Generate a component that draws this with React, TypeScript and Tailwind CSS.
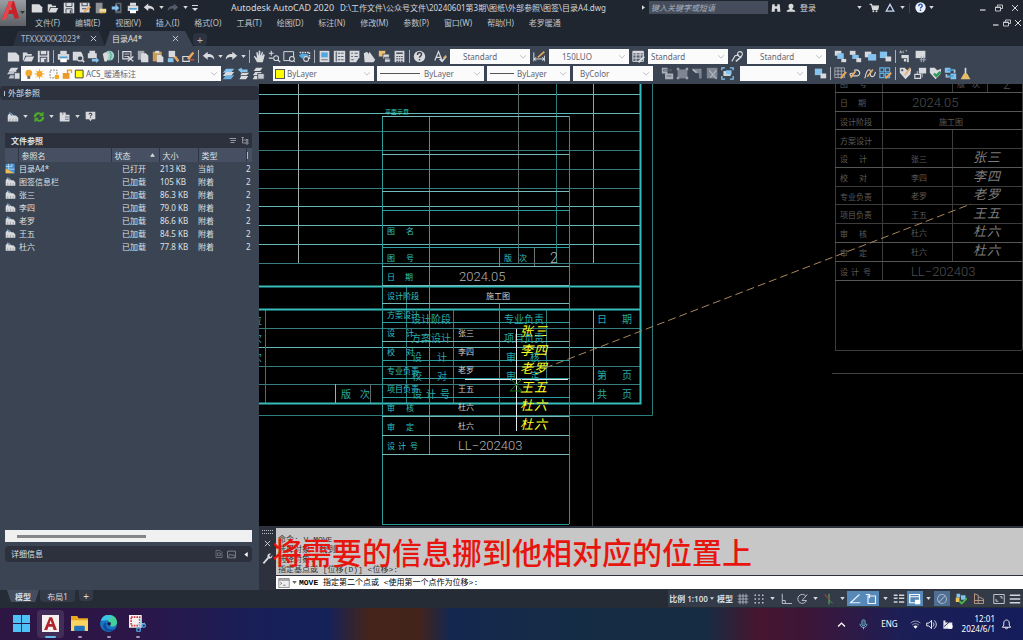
import React from "react";

const W = "#d8dade";
const B = "#84c3ee";
const O = "#e9a85b";

const I: Record<string, React.ReactNode> = {
  new: <path d="M1 3h10l4 4v7H1z" fill={W} />,
  open: <><path d="M1 3h5l1 2h5v2H4l-2 6H1z" fill={W} /><path d="M5 8h10l-3 6H2z" fill={W} /></>,
  save: <><path d="M1 1h14v14H1z" fill={W} /><path d="M4 1v5h8V1M4 15V9h8v6" fill="none" stroke="#48505e" strokeWidth="1.3" /><path d="M9 11h2v4H9z" fill="#48505e" /></>,
  saveas: <><path d="M1 1h13v13H1z" fill={W} /><path d="M4 1v4h7V1M4 9h6" fill="none" stroke="#48505e" strokeWidth="1.4" /><path d="M6 14l1-3 7-6 2 2-7 6z" fill={O} /></>,
  webopen: <><path d="M1 1h9v14H1z" fill="#8c8f94" /><path d="M6 9h9v5H6z" fill="#f0dca0" /><path d="M7 14h7" stroke="#e2af4f" strokeWidth="2" /></>,
  mobile: <><path d="M6 1h8v14H6z" fill="#5d6571" /><path d="M8 3h4v9H8z" fill="#2c333f" /><path d="M1 6h5V3l5 5-5 5v-3H1z" fill={B} /></>,
  print: <><path d="M4 1h8v4H4z" fill={W} /><path d="M1 5h14v7H1z" fill={W} /><path d="M3 9h10" stroke="#4aa0d8" strokeWidth="2" /><path d="M4 11h8v4H4z" fill="#fff" /></>,
  preview: <><path d="M1 2h10l2 3v3H6v5H1z" fill={W} /><circle cx="10" cy="10" r="3.5" fill="none" stroke={W} strokeWidth="1.6" /><path d="M12 12l3 3" stroke={W} strokeWidth="2" /></>,
  publish: <><path d="M3 1h7v3H3zM1 4h11v6H1z" fill={W} /><path d="M6 11h5V9l4 3.5-4 3.5v-2H6z" fill={B} /></>,
  globe: <><circle cx="9" cy="7" r="6" fill="#9ed3c6" /><path d="M1 5c3-3 5-2 7 1l-2 8H3z" fill={W} /><path d="M9 1c3 4 3 8 0 12" fill="none" stroke="#4c8d84" /></>,
  cut: <><path d="M1 2h10v9H1z" fill="none" stroke={W} strokeWidth="1.4" /><path d="M3 5h6M3 8h6" stroke={W} /><path d="M7 8l7 6M14 8l-7 6" stroke={W} strokeWidth="1.6" /></>,
  copy: <><path d="M1 1h8v11H1z" fill="#a3a8b0" /><path d="M5 4h6l3 3v8H5z" fill={W} /></>,
  paste: <><path d="M1 2h11v12H1z" fill="#c99b5a" /><path d="M4 1h5v3H4z" fill={W} /><path d="M6 6h5l3 3v6H6z" fill={W} /></>,
  match: <><path d="M2 1h8v8H2z" fill={W} /><path d="M1 10h7v5H1z" fill={B} /><path d="M8 9l3-2 4 6-2 2z" fill={O} /></>,
  block: <><path d="M1 8h8v6H1z" fill="none" stroke={W} strokeWidth="1.5" /><path d="M6 10l7-8 2 2-6 8z" fill={O} /><path d="M9 12h6" stroke="#c04f38" strokeWidth="2" /></>,
  undo: <path d="M7 2L1 7l6 5V9c4-1 6 0 8 3 0-5-3-7-8-7z" fill={W} />,
  redo: <path d="M9 2l6 5-6 5V9c-4-1-6 0-8 3 0-5 3-7 8-7z" fill={W} />,
  redodim: <path d="M9 2l6 5-6 5V9c-4-1-6 0-8 3 0-5 3-7 8-7z" fill="#535b68" />,
  hand: <path d="M5 15L1 8l1-1 3 3-1-7 1.500-.5L7 7V1h2v6l2-5 1.500.5L11 8l2-3 1.500 1L12 15z" fill={W} />,
  zoompm: <><path d="M1 4h6M4 1v6M1 10h5" stroke={W} strokeWidth="1.3" /><circle cx="10" cy="10" r="3" fill="none" stroke={W} strokeWidth="1.3" /><path d="M12 12l3 3" stroke={W} strokeWidth="1.5" /></>,
  zoomwin: <><path d="M1 2h12v11H1z" fill="none" stroke={W} strokeWidth="1.2" /><circle cx="11" cy="11" r="3" fill="#3b4453" stroke={W} strokeWidth="1.3" /><path d="M13 13l2 2" stroke={W} /></>,
  zoomprev: <><path d="M2 3h12v9" fill="none" stroke={W} strokeWidth="2" strokeDasharray="2 1" /><path d="M1 7l5-4v2h6v4H6v2z" fill="#55a9df" /><circle cx="10" cy="11" r="3" fill="none" stroke={W} strokeWidth="1.3" /></>,
  props: <><path d="M2 1h12v14H2z" fill={W} /><path d="M4 3h8v6H4z" fill="#4ea7e2" /><path d="M4 12h8" stroke="#59616e" /></>,
  palette: <><path d="M1 1h14v14H1z" fill={W} /><path d="M4 2v12M6 4h3M10 4h3M6 8h3M10 8h3M6 12h3M10 12h3" stroke="#59616e" strokeWidth="1.500" /></>,
  toolpal: <><path d="M2 1h12v8l-4 6H2z" fill={W} /><path d="M4 4h2M8 4h4M4 8h2M8 8h4M4 12h3" stroke="#59616e" strokeWidth="1.500" /></>,
  sheets: <path d="M1 4l4-2 2 3 1-3 7 10-2 3H2z" fill={W} />,
  markup: <><path d="M1 1h8v7H1z" fill="#edc070" /><path d="M6 5h8v6H6zM8 9h7v6H8z" fill={W} stroke="#3b4453" /></>,
  calc: <><path d="M2 1h12v14H2z" fill={W} /><path d="M4 4h8" stroke="#48505e" strokeWidth="2" /><path d="M4 8h8M4 11h8M4 14h8" stroke="#48505e" strokeWidth="1.500" strokeDasharray="2 1" /></>,
  help: <><circle cx="8" cy="8" r="7" fill={W} /><path d="M5.500 6c0-4 5-3.500 5-.5 0 2-2.500 2-2.500 4M8 11v2" fill="none" stroke="#39414f" strokeWidth="1.700" /></>,
  helpblue: <><circle cx="8" cy="8" r="7.500" fill="#eef2f8" /><path d="M5.500 6c0-4 5-3.500 5-.5 0 2-2.500 2-2.500 4M8 11v2" fill="none" stroke="#264fae" strokeWidth="2" /></>,
  textstyle: <><path d="M1 13L5.500 2 10 13M3 9h5" fill="none" stroke={W} strokeWidth="1.500" /><path d="M7 11l3 3 5-6" fill="none" stroke={W} strokeWidth="2" /><path d="M12 10l3-3" stroke={O} strokeWidth="2" /></>,
  dim: <><path d="M1 3v11M14 7v7M1 11h13M4 9l-3 2 3 2M11 9l3 2-3 2" fill="none" stroke={W} strokeWidth="1.200" /><path d="M6 9l8-7" stroke={O} strokeWidth="2" /></>,
  table: <><path d="M1 1h13v12H1z" fill="#59626f" /><path d="M1 1h13v3H1z" fill={W} /><path d="M1 2h13v12H1zM1 6h13M1 10h9M5 2v12M10 2v9" fill="none" stroke={W} strokeWidth="1.200" /><path d="M8 15l7-7" stroke={W} strokeWidth="2.500" /></>,
  leader: <><path d="M1 14l4-7 5-1" fill="none" stroke={W} strokeWidth="1.400" /><circle cx="11" cy="5" r="3" fill="none" stroke={W} strokeWidth="1.300" /><path d="M6 14l7-6" stroke={W} strokeWidth="2" /></>,
  order1: <><path d="M1 1h8v6H1z" fill={W} /><path d="M4 4h8v7H4z" fill={B} /><path d="M9 11h6v4H9z" fill={W} /></>,
  order2: <><path d="M1 1h7v5H1z" fill={W} /><path d="M4 6h8v5H4z" fill={B} /><path d="M9 10h6v5H9z" fill={W} /></>,
  order3: <><path d="M1 2h8v7H1z" fill={W} /><path d="M5 5h10v8H5z" fill={B} /></>,
  order4: <><path d="M1 2h9v8H1z" fill={B} /><path d="M8 8h7v6H8z" fill={W} /></>,
  abc: <><path d="M1 4l1-3 1 3M5 1v3M8 1h2" stroke={W} fill="none" /><path d="M3 6h9v9h-2v-5H3zM6 11h3v3H6z" fill={W} /></>,
  hatchback: <><path d="M2 1h12v9H2z" fill={W} /><path d="M9 8v7M12 8v7M7 12h8" stroke="#9ea4ad" strokeWidth="1.400" /></>,
  layers: <><path d="M5 1h9l-3 4H2z" fill={W} /><path d="M3 5h9l-3 4H0zM4 10h11l-2 4H2z" fill="#bfc3ca" /><path d="M9 7h7v8H9z" fill={W} stroke="#3b4453" /></>,
  layblue: <><path d="M5 2h10l-4 5H1z" fill={B} /><path d="M5 6h10l-4 5H1z" fill={W} /><path d="M5 10h10l-4 5H1z" fill="#6db0dc" /></>,
  laymatch: <><path d="M1 3l5-2v2h7v3H6v2z" fill={B} /><path d="M6 7h9l-3 3H4zM5 11h9l-3 4H3z" fill={W} /></>,
  laystate: <><path d="M5 1h8l-3 4H2zM4 6h8l-3 4H1zM3 11h4v4H1z" fill={W} /><path d="M7 8h8v7H7z" fill="#c6cad1" stroke="#3b4453" /></>,
  refedit: <><path d="M1 1h7v7H1zM5 8h10v7H5z" fill="#a9aeb7" /><path d="M3 3h10v2H3zM7 11h6" stroke="#59616e" fill="none" /></>,
  refset: <><path d="M2 3h12v11H2z" fill="#7f8691" /><path d="M1 1h3v3H1zM12 1h3v3h-3zM1 12h3v3H1zM12 12h3v3h-3z" fill="#9da3ad" /></>,
  refsub: <><path d="M1 2h12v12h-3V8L5 7z" fill="#7f8691" /><path d="M2 3l5 4" stroke="#b0b5bd" strokeWidth="2" /></>,
  refx: <><path d="M1 1h13v13H1z" fill="#7f8691" /><path d="M4 4l9 11M13 4L5 13" stroke="#adb2bb" strokeWidth="1.600" /></>,
  refsave: <><path d="M1 4V1h4M11 1h4v3M15 11v4h-4M5 15H1v-4" fill="none" stroke={B} strokeWidth="1.600" /><path d="M3 5h9v6H3z" fill={W} /><path d="M6 4h7v5H6z" fill={B} /></>,
  hatch: <><path d="M1 1h12v12H1zM1 5h12M1 9h12M5 1v12M9 1v12" fill="none" stroke="#aeb4bd" /><path d="M8 14l7-8" stroke={O} strokeWidth="2.500" /></>,
  pline: <><path d="M6 4c7-2 10 5 4 7H3c-3-1-2-4 2-3" fill="none" stroke={W} strokeWidth="1.400" /><path d="M2 13l6-8" stroke={O} strokeWidth="2.400" /></>,
  spline: <><path d="M1 14C4-1 9 3 8 8s5 6 6-2" fill="none" stroke={W} strokeWidth="1.300" /><path d="M4 12l7-9" stroke={O} strokeWidth="2" /></>,
  array: <><path d="M1 1h5v5H1zM8 1h5v5H8zM1 8h5v5H1zM8 8h5v5H8z" fill="none" stroke="#5caee6" strokeWidth="1.500" /><path d="M8 14l7-7" stroke={O} strokeWidth="2.500" /></>,
  tag: <><path d="M1 1h6l3 3 5-2-1 7-6 6-7-8z" fill={W} /><path d="M7 10l7-9" stroke={O} strokeWidth="2" /><circle cx="4" cy="4" r="1.300" fill="#3b4453" /></>,
  attr: <><path d="M6 1h9v7H6z" fill={W} /><path d="M1 9h7v5H1z" fill="none" stroke={W} strokeWidth="1.400" /><path d="M10 8v5M4 5v4" stroke={W} /></>,
  tagg: <><path d="M1 1h6l3 3 5-2-1 7-6 6-7-8z" fill={W} /><path d="M6 8l3 3 5-5" fill="none" stroke="#2e9959" strokeWidth="3" /></>,
  sync: <><path d="M1 1h7v6H1zM8 8h7v7H8z" fill={B} /><path d="M9 4h4v3M7 12H3V9" fill="none" stroke={W} strokeWidth="2" /><path d="M4 3h9v2H4zM3 10h9v2H3z" fill="#429edc" /></>,
  broom: <><path d="M7 1h2v8H7z" fill={W} /><path d="M6 8h4l4 7H2z" fill="#e3bd68" /></>,
  binoc: <path d="M2 2h4v3h4V2h4l1 12h-5V9H6v5H1z" fill={W} />,
  user: <path d="M8 1c6 0 4 7 2 8 0 2 5 1 5 5H1c0-4 5-3 5-5C4 8 2 1 8 1" fill={W} />,
  cart: <><path d="M1 2h3l2 8h8l1-5H5" fill="none" stroke={W} strokeWidth="2" /><path d="M5 5h10l-1 5H6z" fill={W} /><circle cx="7" cy="13" r="1.600" fill={W} /><circle cx="12" cy="13" r="1.600" fill={W} /></>,
  a360: <path d="M8 2l6 11H2zM8 1v4M1 13h4M11 13h4" fill="none" stroke="#c6d6f4" strokeWidth="2" />,
  min: <path d="M2 12h11" stroke={W} strokeWidth="2.500" />,
  restore: <path d="M5 5V2h10v7h-4M1 6h10v8H1zM1 7h10" fill="none" stroke={W} strokeWidth="1.700" />,
  close: <path d="M2 2l12 12M14 2L2 14" stroke={W} strokeWidth="2" />,
  xref: <><path d="M1 6l3-4 3 2 2 2h3l3 3v5H1z" fill={W} /><path d="M4 10v4M8 10v4M12 10v4" stroke="#8b919c" /><path d="M3 2l4 4" stroke="#4f86b4" strokeWidth="1.800" /></>,
  dwg: <><path d="M1 1h13v14H1z" fill="#4b92d4" /><path d="M5 1v8h9M1 5h9V1" stroke="#d7e8f5" fill="none" /><path d="M1 8l13 7H1z" fill="#edbd50" /></>,
  refresh: <><path d="M1 8c0-6 7-8 10-5l3-2v6H8l2-2c-3-2-5 0-6 3z" fill="#4dab28" /><path d="M15 8c0 6-7 8-10 5l-3 2V9h6l-2 2c3 2 5 0 6-3z" fill="#4dab28" /></>,
  attach: <><path d="M1 2h8v3h5v9H1z" fill={W} /><path d="M5 1v4M8 8h5M8 11h5" stroke="#6b727e" strokeWidth="1.300" /></>,
  qbox: <><path d="M1 1h14v11h-5l-2 3-2-3H1z" fill={W} /><path d="M6 5c0-3 4-2 4 0 0 1-2 1-2 3M8 9v1.500" fill="none" stroke="#39414f" strokeWidth="1.500" /></>,
  list: <path d="M1 3h13M3 7h11M3 11h8" stroke="#a7acb5" strokeWidth="1.700" />,
  tree: <path d="M3 1v11h6M3 6h6M10 5h4v3h-4zM10 10h4v4h-4zM1 1h5" stroke="#a7acb5" fill="none" strokeWidth="1.500" />,
  page: <path d="M2 1h8l4 4v10H2zM5 6h6v5H5z" fill="none" stroke="#747b87" strokeWidth="1.500" />,
  pic: <path d="M1 2h14v12H1zM2 12l4-5 3 3 2-2 3 4" fill="none" stroke="#8a909b" strokeWidth="1.500" />,
  wrench: <path d="M1 14L8 6c-1-3 2-6 5-5l-2.500 3 2 2L15 3c1 3-2 6-5 5l-7 8z" fill={W} />,
  prompt: <><path d="M1 2h14v12H1z" fill="#eee" stroke="#777" /><path d="M1 4h14" stroke="#777" strokeWidth="1.500" /><path d="M3 7l2 1.500L3 10M7 11h3" fill="none" stroke="#555" /></>,
  grid: <path d="M4 1v14M8 1v14M12 1v14M1 4h14M1 8h14M1 12h14" stroke="#c3c8d0" />,
  dots: <path d="M2 3h13M2 8h13M2 13h13" stroke="#c3c8d0" strokeWidth="2" strokeDasharray="2 3" />,
  ortho: <path d="M3 1v13h13M3 10h4v4" fill="none" stroke="#b8bec7" strokeWidth="1.300" />,
  polar: <path d="M13 4a6 6 0 1 0 1 6H8l7-8" fill="none" stroke="#b8bec7" strokeWidth="1.300" />,
  iso: <><path d="M8 1v14" stroke="#59a855" strokeWidth="1.500" /><path d="M2 2l6 6" stroke="#8e4148" strokeWidth="1.500" /><path d="M8 9l5 5" stroke="#59a855" /></>,
  otrack: <path d="M14 2L2 13h13" fill="none" stroke="#edf4fc" strokeWidth="1.500" />,
  osnap: <path d="M4 4h10v10H4zM1 2h5v5" fill="none" stroke="#edf4fc" strokeWidth="1.500" />,
  lwt: <path d="M1 3h5M8 3h7M1 7h5M8 7h7M1 12h5M8 12h7" stroke="#d0d4da" strokeWidth="2" />,
  sel: <><path d="M1 2h13v11H1zM1 5h13" fill="none" stroke="#fff" strokeWidth="1.600" /><path d="M8 9h7v6H8z" fill="#fff" /></>,
  nodisp: <><circle cx="8" cy="8" r="6" fill="none" stroke="#a6b4c6" strokeWidth="1.400" /><path d="M4 12l8-8" stroke="#a6b4c6" strokeWidth="1.400" /></>,
  hw: <><path d="M2 1h5v5H2zM8 3h6v6H8z" fill={B} /><path d="M1 6h5v6H1z" fill="#e8c254" /><path d="M6 11l3 3 7-7" fill="none" stroke="#4db44d" strokeWidth="2.500" /></>,
  clean: <path d="M2 1l5 2v11H2zM7 5l7 3v6H7M2 10h12" fill="none" stroke="#c49d86" strokeWidth="1.200" />,
  full: <path d="M1 2h14v12H1zM9 5h3v3M4 8v3h3" fill="none" stroke="#c3c8d0" strokeWidth="1.300" />,
  burger: <path d="M1 3h14M1 8h14M1 13h14" stroke="#d3d6dc" strokeWidth="2" />,
  mic: <><rect x="5.500" y="1" width="5" height="9" rx="2.500" fill="#345877" stroke="#87c1e4" /><path d="M3 7c0 7 10 7 10 0M8 12v3" fill="none" stroke="#87c1e4" strokeWidth="1.300" /></>,
  wifi: <><path d="M1 6c4-4 10-4 14 0M3 9c3-3 7-3 10 0" fill="none" stroke="#9fa5c0" strokeWidth="1.400" /><path d="M5 11c2-2 4-2 6 0l-3 3z" fill="#fff" /></>,
  sound: <path d="M1 6h3l4-4v12l-4-4H1zM10 5c2 2 2 4 0 6M12 2c4 4 4 8 0 12" fill="none" stroke="#fff" strokeWidth="1.300" />,
  bat: <><path d="M2 2h3v3h10v9H2z" fill="#e6e6ee" /><path d="M3 11l8-7" stroke="#20225a" strokeWidth="1.300" /><circle cx="12" cy="11" r="3.500" fill="#fff" /></>,
  bell: <path d="M2 12l2-3V6c0-6 8-6 8 0v3l2 3zM6 12c0 3 4 3 4 0" fill="none" stroke="#fff" strokeWidth="1.300" />,
  up: <path d="M3 11l5-5 5 5" fill="none" stroke="#fff" strokeWidth="2" />,
  win: <path d="M0 0h7.600v7.600H0zM8.400 0H16v7.600H8.400zM0 8.400h7.600V16H0zM8.400 8.400H16V16H8.400z" fill="#4fc1f5" />,
  acad: <><path d="M0 0h16v16H0z" fill="#f6f0f0" /><path d="M2 14L7 2h2.500L14 14h-3l-1-3H6l-1 3zM7 8.500h2.300L8 5z" fill="#b0252b" fillRule="evenodd" /></>,
  folder: <><path d="M0 1h6l1 2h9v12H0z" fill="#e8a823" /><path d="M0 5h16v10H0z" fill="#fbd462" /><path d="M3 15v-4c0-1 1-1 1-1h8s1 0 1 1v4z" fill="#2473bd" /></>,
  edge: <><circle cx="8" cy="8" r="8" fill="#1a74c6" /><path d="M1 5C3-2 16-2 16 7c0 5-8 5-7 1 0-4-6-5-8-3" fill="#45cf9a" /><path d="M1 5C3-1 9-1 12 2 8 2 9 5 6 5c-2 0-4 1-5 0" fill="#3cc4e4" /><path d="M6 7c-2 5 3 8 8 6-3 4-11 3-11-3 0-2 2-3 3-3" fill="#0f4c9a" /><circle cx="8.600" cy="8.300" r="1.700" fill="#1b1b4c" /></>,
  snip: <><path d="M0 0h12v12H0z" fill="#f4f1f3" /><path d="M2 2h8v8H2z" fill="none" stroke="#c9353b" strokeWidth="1.500" strokeDasharray="1.500 1" /><path d="M7 9l8-1M11 4l-1 9" stroke="#b6d3e8" strokeWidth="1.200" /><circle cx="9" cy="14" r="1.700" fill="none" stroke="#4697d2" strokeWidth="1.400" /><circle cx="14" cy="10" r="1.500" fill="none" stroke="#4697d2" strokeWidth="1.400" /></>,
};

function Ic({ n, c = "size-[13px]" }: { n: string; c?: string }) {
  return <svg viewBox="0 0 16 16" className={`${c} shrink-0`} aria-hidden="true">{I[n]}</svg>;
}
const Caret = ({ w = "w-[8px]" }: { w?: string }) => (
  <button aria-label="展开" className={`flex ${w} shrink-0 items-center justify-center`}>
    <svg viewBox="0 0 6 4" className="h-[3px] w-[5px]"><path d="M0 0h6L3 4z" fill={W} /></svg>
  </button>
);
const Sep = () => <span className="mx-[2px] h-[13px] w-px shrink-0 bg-[#aab0ba]" />;

function Tools({ list }: { list: string[] }) {
  return (
    <>
      {list.map((n, i) =>
        n === "|" ? <Sep key={i} /> : n === "v" ? <Caret key={i} /> : (
          <button key={i} aria-label={n} className="flex w-[15px] shrink-0 items-center justify-center"><Ic n={n} /></button>
        )
      )}
    </>
  );
}

function Pick({ label, value, box, pad = "pl-[3px]", children }: { label: string; value: string; box: string; pad?: string; children?: React.ReactNode }) {
  return (
    <div className={`flex h-[15px] shrink-0 items-center bg-[#fbfbfc] pr-[4px] ${box} ${pad}`}>
      {children}
      <select aria-label={label} className="min-w-0 flex-1 appearance-none bg-transparent text-[8px] leading-[14px] text-[#5f6572] outline-none">
        <option>{value}</option>
      </select>
      <svg viewBox="0 0 8 5" className="h-[4px] w-[6px] shrink-0"><path d="M0 0l4 4 4-4" fill="none" stroke="#a9adb4" /></svg>
    </div>
  );
}

const menus = ["文件(F)", "编辑(E)", "视图(V)", "插入(I)", "格式(O)", "工具(T)", "绘图(D)", "标注(N)", "修改(M)", "参数(P)", "窗口(W)", "帮助(H)", "老罗暖通"];
const refs = [
  ["目录A4*", "已打开", "213 KB", "当前"],
  ["图签信息栏", "已加载", "105 KB", "附着"],
  ["张三", "已加载", "86.3 KB", "附着"],
  ["李四", "已加载", "79.0 KB", "附着"],
  ["老罗", "已加载", "86.6 KB", "附着"],
  ["王五", "已加载", "84.5 KB", "附着"],
  ["杜六", "已加载", "77.8 KB", "附着"],
];

function Header() {
  return (
    <header className="flex h-[30px] bg-[#20262f]">
      <button aria-label="应用程序菜单" className="flex h-[26px] w-[26px] shrink-0 items-center bg-gradient-to-b from-[#9a9da1] to-[#5d6167]">
        <svg viewBox="0 0 26 26" className="size-[26px]">
          <path d="M2 19L9 1h5l5 17-4 1-2-5H8l-2 5zM9 10h3l-1-4z" fill="#c5222a" fillRule="evenodd" />
          <path d="M9 1h4L6 19l-4 1z" fill="#e8464b" />
          <path d="M20 11h5l-2.500 3z" fill="#333" />
        </svg>
      </button>
      <div className="min-w-0 flex-1">
        <div className="flex h-[15px] items-center">
          <div className="flex w-[205px] shrink-0 items-center pl-[3px]">
            {["new", "open", "save", "saveas", "webopen", "mobile", "print", "undo"].map((n) => (
              <button key={n} aria-label={n} className="flex w-[16px] justify-center"><Ic n={n} c="size-[12px]" /></button>
            ))}
            <Caret />
            <button aria-label="redo" className="flex w-[16px] justify-center"><Ic n="redodim" c="size-[12px]" /></button>
            <Caret />
            <button aria-label="自定义快速访问工具栏" className="flex w-[12px] justify-center"><svg viewBox="0 0 6 6" className="size-[6px]"><path d="M0 0h6v1H0zM0 3h6L3 6z" fill={W} /></svg></button>
          </div>
          <h1 className="w-[410px] shrink-0 text-[9px] leading-[14px] whitespace-nowrap text-[#d5d8dd]">
            Autodesk AutoCAD 2020
            <span className="ml-[6px] text-[8px]">{"D:\\工作文件\\公众号文件\\20240601第3期\\图纸\\外部参照\\图签\\目录A4.dwg"}</span>
          </h1>
          <svg viewBox="0 0 4 6" className="ml-[1px] h-[5px] w-[3px]"><path d="M0 0l4 3-4 3z" fill={W} /></svg>
          <input aria-label="搜索" placeholder="键入关键字或短语" className="ml-[4px] h-[13px] w-[119px] shrink-0 bg-[#454d5c] px-[2px] text-[8px] italic text-white outline-none placeholder:text-[#a9b0bc]" />
          <div className="flex flex-1 items-center pl-[1px]">
            <button aria-label="查找" className="flex w-[14px] justify-center"><Ic n="binoc" c="size-[10px]" /></button>
            <button className="flex items-center gap-[4px] pl-[3px] text-[8px] text-[#d5d8dd]"><Ic n="user" c="size-[10px]" />登录</button>
            <div className="ml-auto flex items-center">
              <Caret w="w-[14px]" />
              <button aria-label="商店" className="flex w-[16px] justify-center"><Ic n="cart" c="size-[10px]" /></button>
              <button aria-label="应用" className="flex w-[16px] justify-center"><Ic n="a360" c="size-[10px]" /></button>
              <Caret />
              <span className="mx-[3px] h-[10px] w-px bg-[#3d4552]" />
              <button aria-label="帮助" className="flex w-[14px] justify-center"><Ic n="helpblue" c="size-[11px]" /></button>
              <Caret />
              <div className="ml-[40px] flex">
                {["min", "restore", "close"].map((n) => <button key={n} aria-label={n} className="flex w-[16px] justify-center"><Ic n={n} c="size-[8px]" /></button>)}
              </div>
            </div>
          </div>
        </div>
        <nav className="flex h-[15px] items-center gap-[15px] pl-[9px] text-[8px] text-[#bfc3ca]">
          {menus.map((m) => <a key={m} href="#" className="whitespace-nowrap">{m}</a>)}
          <div className="ml-auto flex">
            {["min", "restore", "close"].map((n) => <button key={n} aria-label={`文档 ${n}`} className="flex w-[11px] justify-center"><Ic n={n} c="size-[8px]" /></button>)}
          </div>
        </nav>
      </div>
    </header>
  );
}

function Toolbars() {
  return (
    <>
      <div className="flex h-[16px] items-end bg-[#20262f] pl-[13px] text-[8px] text-[#b5bac3]">
        <div className="flex h-[15px] w-[92px] items-center rounded-t bg-[#2c3340] pl-[8px] [clip-path:polygon(5px_0,86px_0,100%_100%,0_100%)]">
          <a href="#" className="w-[69px]">TFXXXXXX2023*</a>
          <button aria-label="关闭"><Ic n="close" c="size-[7px]" /></button>
        </div>
        <div className="flex h-[15px] w-[88px] items-center bg-[#3b4453] pl-[7px] text-[#e2e4e8] [clip-path:polygon(5px_0,80px_0,100%_100%,0_100%)]">
          <a href="#" className="w-[60px]">目录A4*</a>
          <button aria-label="关闭"><Ic n="close" c="size-[7px]" /></button>
        </div>
        <button aria-label="新建选项卡" className="h-[13px] w-[14px] rounded bg-[#2c3340] text-[11px] leading-[12px]">+</button>
      </div>
      <div className="bg-[#3b4453] pt-[2px] pb-[2px]">
        <div className="flex h-[17px] items-center pl-[6px]">
          <Tools list={"new open save | print preview publish globe | cut copy paste match block | undo v redo v | hand zoompm zoomwin zoomprev | props palette toolpal sheets markup calc | help".split(" ")} />
          <div className="ml-[6px] flex items-center gap-[2px]">
            <Tools list={["textstyle"]} /><Pick label="文字样式" value="Standard" box="w-[80px]" pad="pl-[13px]" />
            <Tools list={["dim"]} /><Pick label="标注样式" value="150LUO" box="w-[80px]" pad="pl-[13px]" />
            <Tools list={["table"]} /><Pick label="表格样式" value="Standard" box="w-[80px]" />
            <Tools list={["leader"]} /><Pick label="引线样式" value="Standard" box="w-[79px]" pad="pl-[13px]" />
          </div>
          <div className="ml-[7px] flex items-center"><Tools list={"order1 order2 order3 order4 | abc hatchback".split(" ")} /></div>
        </div>
        <div className="flex h-[17px] items-center pl-[6px]">
          <Tools list={["layers"]} />
          <Pick label="图层" value="ACS_暖通标注" box="w-[200px]" pad="pl-[2px]">
            <svg viewBox="0 0 64 14" className="mr-[1px] h-[14px] w-[62px] shrink-0">
              <circle cx="6" cy="6" r="3.500" fill="#f2a92c" /><path d="M4.500 9h3v3h-3z" fill="#7c6d54" />
              <circle cx="17" cy="7" r="3" fill="#f5a623" /><path d="M17 2v10M12 7h10M13.500 3.500l7 7M20.500 3.500l-7 7" stroke="#f5a623" />
              <path d="M28 3h7v8h-7z" fill="none" stroke="#888" strokeDasharray="2 1" /><circle cx="35" cy="10" r="2.500" fill="#f5a623" />
              <path d="M41 6h7v6h-7z" fill="#e99a2c" /><path d="M46 6V3h4v3" fill="none" stroke="#e99a2c" strokeWidth="1.500" />
              <path d="M54 3h8v8h-8z" fill="#ffff00" stroke="#444" />
            </svg>
          </Pick>
          <Tools list={["layblue", "laymatch", "laystate"]} />
          <div className="ml-[7px] flex items-center gap-[3px]">
            <Pick label="颜色" value="ByLayer" box="w-[101px]" pad="pl-[2px]"><span className="mr-[2px] size-[10px] border border-[#555] bg-[#ffff00]" /></Pick>
            <Pick label="线型" value="ByLayer" box="w-[107px]"><span className="mr-[4px] h-px w-[40px] bg-[#555]" /></Pick>
            <Pick label="线宽" value="ByLayer" box="w-[83px]"><span className="mr-[3px] h-px w-[24px] bg-[#555]" /></Pick>
            <Pick label="打印样式" value="ByColor" box="w-[80px]" pad="pl-[7px]" />
          </div>
          <div className="ml-[7px] flex items-center"><Tools list={"refedit refset refsub refx refsave".split(" ")} /></div>
          <div className="ml-[5px] flex"><Pick label="参照编辑" value="" box="w-[67px]" /></div>
          <div className="ml-[6px] flex items-center"><Tools list={"order4 | hatch pline spline array | tag attr tagg sync broom".split(" ")} /></div>
        </div>
      </div>
    </>
  );
}

function Panel() {
  const th = "border-l border-[#2f3643] pl-[3px] text-left font-normal";
  return (
    <aside className="flex w-[259px] shrink-0 flex-col bg-[#3b4453] text-[8px] text-[#dfe1e5]">
      <div className="mt-[2px] flex h-[14px] items-center gap-[3px] rounded bg-[#2c313d] pl-[4px]">
        <span className="h-[5px] w-px bg-[#c0c4cb]" /><h2>外部参照</h2>
      </div>
      <div className="flex h-[33px] items-center pl-[5px]">
        {["xref", "refresh", "attach"].map((n) => (
          <div key={n} className="flex w-[26px] items-center"><button aria-label={n} className="flex w-[15px] justify-center"><Ic n={n} c="size-[12px]" /></button><Caret w="w-[10px]" /></div>
        ))}
        <button aria-label="帮助" className="flex w-[15px] justify-center"><Ic n="qbox" c="size-[11px]" /></button>
      </div>
      <section className="mx-[5px] mr-[7px] flex flex-1 flex-col">
        <div className="flex h-[15px] items-center bg-[#2c313d] pr-[3px] pl-[6px] font-bold">
          <h3 className="flex-1">文件参照</h3>
          <button aria-label="列表图" className="mr-[4px]"><Ic n="list" c="size-[8px]" /></button>
          <button aria-label="树状图"><Ic n="tree" c="size-[8px]" /></button>
        </div>
        <table className="w-full table-fixed border-collapse">
          <colgroup><col className="w-[13px]" /><col /><col className="w-[48px]" /><col className="w-[39px]" /><col className="w-[48px]" /><col className="w-[6px]" /></colgroup>
          <thead>
            <tr className="h-[14px] bg-[#465062] leading-[13px]">
              <th aria-label="图标" /><th className={th}>参照名</th>
              <th className={th}><span className="flex items-center justify-between pr-[4px]">状态<svg viewBox="0 0 6 4" className="h-[4px] w-[5px]"><path d="M3 0l3 4H0z" fill={W} /></svg></span></th>
              <th className={th}>大小</th><th className={th}>类型</th><th aria-label="日期" className="border-l border-[#2f3643]"><span className="block h-[7px] w-px bg-[#8bc4e8]" /></th>
            </tr>
          </thead>
          <tbody>
            {refs.map((r, i) => (
              <tr key={r[0]} className="h-[13px] leading-[12px]">
                <td><Ic n={i ? "xref" : "dwg"} c="size-[11px]" /></td>
                <td className="pl-[1px]">{r[0]}</td><td className="pl-[11px] whitespace-nowrap">{r[1]}</td><td className="pl-[1px] whitespace-nowrap">{r[2]}</td><td>{r[3]}</td><td>2</td>
              </tr>
            ))}
          </tbody>
        </table>
      </section>
      <div className="mr-[7px] ml-[5px] flex h-[12px] items-center bg-[#f0f0f0] px-[12px]"><span className="h-[3px] w-[129px] bg-[#858585]" /></div>
      <div className="mt-[4px] mr-[7px] mb-[28px] ml-[5px] flex h-[16px] items-center gap-[4px] rounded bg-[#2c313d] pr-[4px] pl-[6px]">
        <h3 className="flex-1">详细信息</h3>
        <button aria-label="详细信息"><Ic n="page" c="size-[8px]" /></button>
        <button aria-label="预览"><Ic n="pic" c="size-[9px]" /></button>
        <svg viewBox="0 0 4 6" className="ml-[4px] h-[5px] w-[4px]"><path d="M4 0v6L0 3z" fill="#fff" /></svg>
      </div>
    </aside>
  );
}

function Words({ t, x, y, s, f }: { t: string; x: number[]; y: number; s: number; f: string }) {
  const parts = x.length === 1 ? [t] : Array.from(t);
  return <>{parts.map((p, i) => <text key={i} x={x[i]} y={y} fontSize={s} fill={f} dominantBaseline="central">{p}</text>)}</>;
}

const CAD = "#25a9a9";

function TitleBlock({ dim = false }: { dim?: boolean }) {
  const label = dim ? "#5c5c5c" : "#2fc4c4";
  const val = dim ? "#505050" : "#b4b4b4";
  const name = dim ? "#5c5c5c" : "#d0d0d0";
  const sign = dim ? "#7c7c7c" : "#ffff20";
  const line = dim ? "#3c3c3c" : "#2b9b9b";
  const light = dim ? "#555555" : "#76b8b8";
  const rows: [string, number[], number][] = [
    ["图名", [387, 406], 230], ["图号", [387, 406], 257], ["日期", [387, 405], 276], ["设计阶段", [387], 295], ["方案设计", [387], 314],
    ["设计", [387, 406], 332], ["校对", [387, 406], 351], ["专业负责", [387], 370], ["项目负责", [387], 388], ["审核", [387, 406], 407], ["审定", [387, 406], 426], ["设计号", [387, 398, 410], 445],
  ];
  const names: [string, number][] = [["张三", 332], ["李四", 351], ["老罗", 369], ["王五", 388], ["杜六", 406], ["杜六", 425]];
  return (
    <g>
      <path d="M382.500 116V524M429.500 116V454M499.500 247V266M499.500 304V435M382 322.500H569M382 360.500H569M382 378.500H569M382 397.500H569M382 524.500H569M382 210.500H569M382 247.500H569" stroke={line} fill="none" />
      <path d="M382 154.500H569M382 191.500H569M382 266.500H569M382 285.500H569M382 303.500H569M382 341.500H569M382 416.500H569M382 435.500H569M382 454.500H569M382 116.500H569" stroke={light} fill="none" />
      <path d="M569.500 116V524M534.500 247V266" stroke={dim ? line : "#6d7575"} />
      {rows.map(([t, x, y]) => <Words key={t} t={t} x={x} y={y} s={8} f={label} />)}
      <Words t="版次" x={[504, 519]} y={257} s={8} f={label} />
      <Words t="施工图" x={[486]} y={295} s={8} f={name} />
      <g className="font-[Roboto,'Liberation_Sans',sans-serif] font-light">
        <Words t="2" x={[550]} y={258} s={14} f={val} />
        <Words t="2024.05" x={[459]} y={276} s={13} f={val} />
        <Words t="LL−202403" x={[458]} y={445} s={13} f={val} />
      </g>
      {names.map(([a, y]) => (
        <g key={y}>
          <Words t={a} x={[458]} y={y} s={8} f={name} />
          <g className="italic"><Words t={a} x={[520, 534]} y={y - 1} s={13} f={sign} /></g>
        </g>
      ))}
    </g>
  );
}

function Drawing() {
  const cells: [string, number[], number][] = [
    ["设计阶段", [411], 319], ["方案设计", [411], 338], ["设计", [412, 437], 357], ["校对", [412, 437], 376], ["设计号", [412, 426, 440], 394],
    ["专业负责", [504], 319], ["项目负责", [504], 338], ["审核", [506, 530], 357], ["审定", [506, 530], 376],
    ["版次", [341, 360], 394], ["日期", [597, 622], 319], ["第页", [597, 622], 375], ["共页", [597, 622], 394],
    ["位", [252], 320], ["次", [252], 338], ["次", [252], 357],
  ];
  return (
    <svg viewBox="259 84 764 442" preserveAspectRatio="xMinYMin meet" className="block size-full bg-black" role="img" aria-label="图签图纸">
      <g transform="translate(453 -174)">
        <TitleBlock dim />
      </g>
      <path d="M832 373.500H1023M592.500 415V526" stroke="#404242" />
      <path d="M259 94.500H640M259 113.500H640M259 206.500H640M259 225.500H640M259 244.500H640M259 347.500H640M593.500 84V263M593.500 309V403" stroke="#62b9b9" />
      <path d="M259 131.500H640M259 150.500H640M259 169.500H640M259 188.500H640M259 263.500H640M259 328.500H640M259 366.500H640M259 384.500H640" stroke="#377d7d" />
      <path d="M556.500 84V263M546.500 309V384M259 415.500H652.500V84M265.500 309V403M406.500 286V403M453.500 309V403" stroke="#2c7c7c" fill="none" />
      <path d="M298.500 84V263M335.500 384V403" stroke="#a0adad" />
      <path d="M518.500 84V263M370.500 384V403" stroke="#626b6b" />
      <path d="M259 286.500H640M259 309.500H640M259 403.500H640.500V84" stroke="#36bcbc" strokeWidth="2" fill="none" />
      <TitleBlock />
      <Words t="平面示意" x={[385]} y={112} s={6} f="#2fd4d4" />
      {cells.map(([t, x, y]) => <Words key={`${t}${y}`} t={t} x={x} y={y} s={10} f={CAD} />)}
      <path d="M516.500 329V431M465 379.500H568" stroke="#e4e8e8" />
      <path d="M511 379l11 12H510l12-12" stroke="#176f17" fill="none" />
      <path d="M545 368L971 204" stroke="#a9875c" strokeDasharray="8 4" />
    </svg>
  );
}

function Command() {
  return (
    <section className="relative flex h-[64px] shrink-0 border-t-2 border-[#2c313d] bg-[#2c313d]">
      <div className="flex w-[17px] flex-col items-center gap-[6px] pt-[2px]">
        <span className="h-[4px] w-[11px] border-y border-dotted border-[#b9bdc5]" />
        <button aria-label="关闭"><Ic n="close" c="size-[7px]" /></button>
        <button aria-label="自定义"><Ic n="wrench" c="size-[11px]" /></button>
      </div>
      <div className="flex flex-1 flex-col font-['Liberation_Mono','Noto_Sans_CJK_SC',monospace] text-[8px] text-[#333]">
        <div className="flex h-[47px] flex-col justify-end bg-[#c7c7c7] pl-[2px] leading-[10px]">
          <p>命令: V MOVE</p><p>选择对象: 找到</p><p>选择对象:</p><p>指定基点或 [位移(D)] &lt;位移&gt;:</p>
        </div>
        <div className="mt-px flex h-[13px] items-center bg-white pl-[2px]">
          <Ic n="prompt" c="size-[12px]" /><svg viewBox="0 0 6 4" className="mx-[2px] h-[3px] w-[5px]"><path d="M0 0h6L3 4z" fill="#666" /></svg>
          <label htmlFor="cmd" className="whitespace-pre text-black"><b>MOVE</b> 指定第二个点或 &lt;使用第一个点作为位移&gt;:</label>
          <input id="cmd" className="min-w-0 flex-1 bg-transparent outline-none" />
        </div>
      </div>
      <p className="absolute top-[9px] left-[13px] text-[30px] leading-[32px] font-medium whitespace-nowrap text-[#e8150f]">将需要的信息挪到他相对应的位置上</p>
    </section>
  );
}

function Status() {
  const on = "bg-[#5688b8]";
  const item = (n: string, c = "") => <button key={n} aria-label={n} className={`flex h-[15px] w-[16px] shrink-0 items-center justify-center ${c}`}><Ic n={n} c="size-[12px]" /></button>;
  return (
    <div className="flex h-[18px] items-start bg-[#252c36] text-[8px] text-[#d9dce1]">
      <div className="flex pl-[7px]">
        <button className="h-[12px] w-[32px] rounded-b bg-[#434d5e] leading-[11px] font-bold [clip-path:polygon(0_0,100%_0,88%_100%,12%_100%)]">模型</button>
        <button className="ml-[1px] h-[12px] w-[35px] rounded-b bg-[#333b48] leading-[11px]">布局1</button>
        <button aria-label="新建布局" className="ml-[4px] h-[11px] w-[14px] rounded-b bg-[#333b48] text-[10px] leading-[10px]">+</button>
      </div>
      <div className="ml-auto flex h-[17px] items-center bg-[#333b48]">
        <button className="flex h-[15px] w-[47px] items-center justify-center gap-[2px] whitespace-nowrap font-semibold">比例 1:100<svg viewBox="0 0 6 4" className="h-[3px] w-[4px]"><path d="M0 0h6L3 4z" fill={W} /></svg></button>
        <button className="w-[20px] font-bold">模型</button>
        {item("grid")}{item("dots")}<Caret w="w-[11px]" />
        {item("ortho")}{item("polar")}<Caret w="w-[11px]" />{item("iso")}<Caret w="w-[10px]" />
        {item("otrack", on)}{item("osnap", on)}<Caret w="w-[12px]" />
        {item("lwt")}{item("sel", on)}<Caret w="w-[11px]" />{item("nodisp", "bg-[#4e6e93]")}
        <span className="w-[3px]" />{item("hw")}<span className="w-[2px]" />{item("clean")}<span className="w-[4px]" />{item("full")}{item("burger")}
      </div>
    </div>
  );
}

function Taskbar() {
  return (
    <footer className="flex h-[32px] items-center bg-[linear-gradient(90deg,#2e1644_0%,#2c1648_13%,#191f58_25%,#152259_32%,#44241b_36%,#43241c_41%,#14274f_44%,#152c45_56%,#152c42_69%,#47152f_74%,#3d1538_79%,#1c1f56_88%,#141c5a_100%)] pl-[8px] text-[8px] text-white">
      {["win", "acad", "folder", "edge", "snip"].map((n, i) => (
        <button key={n} aria-label={n} className={`mr-[2px] flex h-[28px] w-[27px] flex-col items-center justify-between rounded pt-[5px] ${i === 1 ? "bg-white/10" : ""}`}>
          <Ic n={n} c="size-[17px]" />
          <span className={i === 0 ? "h-[2px]" : i === 1 ? "h-[2px] w-[11px] rounded bg-[#69b7e8]" : "h-[2px] w-[4px] rounded bg-[#999ab0]"} />
        </button>
      ))}
      <div className="ml-auto flex items-center pr-[11px]">
        <button aria-label="显示隐藏的图标" className="mr-[11px]"><Ic n="up" c="size-[11px]" /></button>
        <button aria-label="麦克风" className="mr-[12px]"><Ic n="mic" c="size-[11px]" /></button>
        <button className="mr-[12px]">ENG</button>
        <button aria-label="网络" className="flex gap-[5px]"><Ic n="wifi" c="size-[11px]" /><Ic n="sound" c="size-[11px]" /><Ic n="bat" c="size-[11px]" /></button>
        <button className="mr-[6px] ml-[9px] text-right leading-[10px]">12:01<br />2024/6/1</button>
        <button aria-label="通知"><Ic n="bell" c="size-[11px]" /></button>
      </div>
    </footer>
  );
}

export default function App() {
  return (
    <div className="flex h-screen flex-col overflow-hidden bg-[#20262f] font-['Noto_Sans','Noto_Sans_CJK_SC',sans-serif]">
      <Header />
      <Toolbars />
      <div className="flex min-h-0 flex-1">
        <Panel />
        <main className="flex min-w-0 flex-1 flex-col">
          <div className="min-h-0 flex-1"><Drawing /></div>
          <Command />
        </main>
      </div>
      <Status />
      <Taskbar />
    </div>
  );
}
